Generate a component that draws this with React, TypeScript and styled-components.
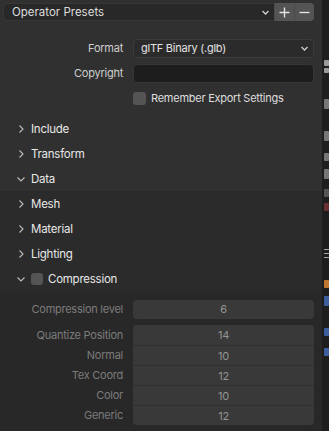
import React from "react";
import styled, { createGlobalStyle } from "styled-components";

const GlobalStyle = createGlobalStyle`
  html, body {
    margin: 0;
    padding: 0;
    background: #1d1d1d;
  }
  body {
    font-family: Inter, "DejaVu Sans", sans-serif;
    font-size: 11px;
    letter-spacing: -0.25px;
    color: #e0e0e0;
  }
`;

const Screen = styled.div`
  display: flex;
  width: 329px;
  height: 431px;
  overflow: hidden;
`;

const Panel = styled.div`
  width: 322px;
  background: #303030;
  display: flex;
  flex-direction: column;
`;

const PresetBar = styled.div`
  display: flex;
  padding: 3px 8px 0 3px;
  height: 18px;
`;

const PresetSelect = styled.div`
  flex: 1;
  display: flex;
  align-items: center;
  justify-content: space-between;
  background: #282828;
  border: 1px solid #363636;
  border-right: none;
  border-radius: 4px 0 0 4px;
  padding: 0 4px 0 8px;
  color: #dcdcdc;
  font-size: 11.5px;
  letter-spacing: 0;
`;

const IconButton = styled.div<{ $last?: boolean }>`
  width: 19px;
  display: flex;
  align-items: center;
  justify-content: center;
  background: #545454;
  border-left: 1px solid #4a4a4a;
  border-radius: ${(p) => (p.$last ? "0 4px 4px 0" : "0")};
`;

const Props = styled.div`
  display: flex;
  flex-direction: column;
  gap: 5px;
  padding: 17px 0 0 0;
`;

const PropRow = styled.div`
  display: grid;
  grid-template-columns: 123px 181px;
  column-gap: 10px;
  height: 20px;
  align-items: center;
`;

const Label = styled.div<{ $dim?: boolean }>`
  text-align: right;
  color: ${(p) => (p.$dim ? "#7c7c7c" : "#cfcfcf")};
  white-space: nowrap;
`;

const SelectField = styled.div`
  height: 19px;
  box-sizing: border-box;
  display: flex;
  align-items: center;
  justify-content: space-between;
  background: #2b2b2b;
  border: 1px solid #3b3b3b;
  border-radius: 4px;
  padding: 0 4px 0 7px;
  color: #e2e2e2;
`;

const TextField = styled.div`
  height: 19px;
  box-sizing: border-box;
  background: #1d1d1d;
  border: 1px solid #363636;
  border-radius: 4px;
`;

const CheckLine = styled.div`
  display: flex;
  align-items: center;
  gap: 5px;
  color: #dedede;
`;

const Check = styled.div<{ $size?: number }>`
  width: ${(p) => p.$size ?? 13}px;
  height: ${(p) => p.$size ?? 13}px;
  background: #545454;
  border-radius: 3px;
  flex-shrink: 0;
`;

const Sections = styled.div`
  margin-top: 8px;
  display: flex;
  flex-direction: column;
`;

const SectionHead = styled.div`
  height: 25px;
  display: flex;
  align-items: center;
  padding-left: 16px;
  gap: 5px;
  color: #e8e8e8;
  font-size: 11.5px;
`;

const SubArea = styled.div<{ $shade: string }>`
  background: ${(p) => p.$shade};
  display: flex;
  flex-direction: column;
  flex: 1;
`;

const SubBody = styled.div`
  flex: 1;
  padding-top: 8px;
  display: flex;
  flex-direction: column;
  gap: 6px;
`;

const NumField = styled.div`
  height: 19px;
  display: flex;
  align-items: center;
  justify-content: center;
  background: #393939;
  border-radius: 4px;
  color: #949494;
`;

const NumGroup = styled.div`
  display: grid;
  grid-template-columns: 123px 181px;
  column-gap: 10px;
  grid-auto-rows: 20px;
`;

const GroupCell = styled.div<{ $first?: boolean; $last?: boolean }>`
  display: flex;
  align-items: center;
  justify-content: center;
  background: #393939;
  color: #949494;
  border-top: ${(p) => (p.$first ? "none" : "1px solid #2f2f2f")};
  border-radius: ${(p) =>
    p.$first ? "4px 4px 0 0" : p.$last ? "0 0 4px 4px" : "0"};
`;

const GroupLabel = styled(Label)`
  display: flex;
  align-items: center;
  justify-content: flex-end;
`;

const Strip = styled.div`
  flex: 1;
  background: #1e1e1e;
  display: flex;
  flex-direction: column;
  padding-top: 60px;
`;

const Blip = styled.div<{ $c: string; $h: number; $mt: number; $w?: number }>`
  width: ${(p) => p.$w ?? 5}px;
  height: ${(p) => p.$h}px;
  margin-top: ${(p) => p.$mt}px;
  margin-left: 2px;
  background: ${(p) => p.$c};
  border-radius: 1px;
`;

const Chevron = ({ open }: { open?: boolean }) => (
  <svg width="10" height="10" viewBox="0 0 10 10">
    <path
      d={open ? "M1.5 3.5 L5 7 L8.5 3.5" : "M3.5 1.5 L7 5 L3.5 8.5"}
      fill="none"
      stroke="#bdbdbd"
      strokeWidth="1.1"
    />
  </svg>
);

const SmallDown = () => (
  <svg width="9" height="9" viewBox="0 0 9 9">
    <path d="M1.5 3 L4.5 6 L7.5 3" fill="none" stroke="#d0d0d0" strokeWidth="1.3" />
  </svg>
);

const Plus = () => (
  <svg width="11" height="11" viewBox="0 0 11 11">
    <path d="M5.5 0.5 V10.5 M0.5 5.5 H10.5" stroke="#e8e8e8" strokeWidth="1.3" />
  </svg>
);

const Minus = () => (
  <svg width="11" height="11" viewBox="0 0 11 11">
    <path d="M0.5 5.5 H10.5" stroke="#e8e8e8" strokeWidth="1.3" />
  </svg>
);

const quantize = [
  ["Quantize Position", "14"],
  ["Normal", "10"],
  ["Tex Coord", "12"],
  ["Color", "10"],
  ["Generic", "12"],
];

export default function App() {
  return (
    <>
      <GlobalStyle />
      <Screen>
        <Panel>
          <PresetBar>
            <PresetSelect>
              <span>Operator Presets</span>
              <SmallDown />
            </PresetSelect>
            <IconButton>
              <Plus />
            </IconButton>
            <IconButton $last>
              <Minus />
            </IconButton>
          </PresetBar>

          <Props>
            <PropRow>
              <Label>Format</Label>
              <SelectField>
                <span>glTF Binary (.glb)</span>
                <SmallDown />
              </SelectField>
            </PropRow>
            <PropRow>
              <Label>Copyright</Label>
              <TextField />
            </PropRow>
            <PropRow>
              <span />
              <CheckLine>
                <Check />
                Remember Export Settings
              </CheckLine>
            </PropRow>
          </Props>

          <Sections>
            <SectionHead>
              <Chevron />
              Include
            </SectionHead>
            <SectionHead>
              <Chevron />
              Transform
            </SectionHead>
            <SectionHead>
              <Chevron open />
              Data
            </SectionHead>
          </Sections>

          <SubArea $shade="#2b2b2b">
            <SectionHead>
              <Chevron />
              Mesh
            </SectionHead>
            <SectionHead>
              <Chevron />
              Material
            </SectionHead>
            <SectionHead>
              <Chevron />
              Lighting
            </SectionHead>
            <SectionHead>
              <Chevron open />
              <Check $size={12} />
              Compression
            </SectionHead>
            <SubArea $shade="#282828">
              <SubBody>
                <PropRow>
                  <Label $dim>Compression level</Label>
                  <NumField>6</NumField>
                </PropRow>
                <NumGroup>
                  {quantize.map(([label, val], i) => (
                    <React.Fragment key={label}>
                      <GroupLabel $dim>{label}</GroupLabel>
                      <GroupCell $first={i === 0} $last={i === quantize.length - 1}>
                        {val}
                      </GroupCell>
                    </React.Fragment>
                  ))}
                </NumGroup>
              </SubBody>
            </SubArea>
          </SubArea>
        </Panel>
        <Strip>
          <Blip $c="#9a9a9a" $h={6} $mt={0} />
          <Blip $c="#9a9a9a" $h={5} $mt={2} />
          <Blip $c="#777" $h={10} $mt={26} />
          <Blip $c="#777" $h={10} $mt={22} />
          <Blip $c="#777" $h={8} $mt={12} />
          <Blip $c="#777" $h={10} $mt={8} />
          <Blip $c="#555" $h={8} $mt={10} />
          <Blip $c="#6a3030" $h={8} $mt={6} />
          <Blip $c="#aaa" $h={1} $mt={38} />
          <Blip $c="#aaa" $h={1} $mt={3} />
          <Blip $c="#aaa" $h={1} $mt={3} />
          <Blip $c="#c07830" $h={8} $mt={22} />
          <Blip $c="#3d5f9e" $h={10} $mt={8} />
          <Blip $c="#3d5f9e" $h={8} $mt={22} />
          <Blip $c="#3d5f9e" $h={8} $mt={12} />
        </Strip>
      </Screen>
    </>
  );
}
